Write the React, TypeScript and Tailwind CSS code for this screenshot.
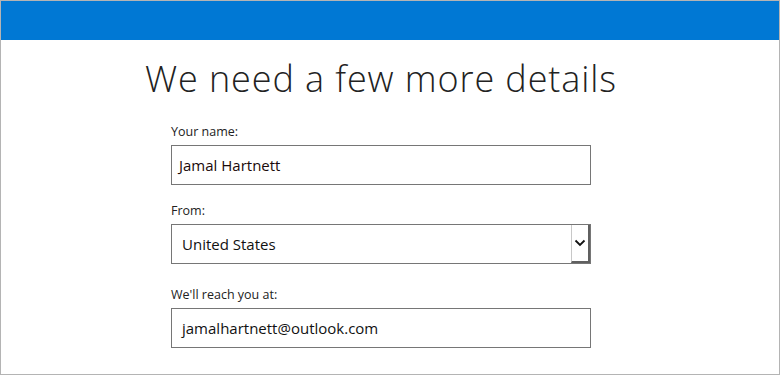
import React from "react";

const font = { fontFamily: '"Open Sans", "Noto Sans", sans-serif' };

function Chevron() {
  return (
    <svg width="12" height="8" viewBox="0 0 12 8" fill="none">
      <path d="M1.5 1.5 L6 6 L10.5 1.5" stroke="#111" strokeWidth="1.8" />
    </svg>
  );
}

export default function App() {
  return (
    <div className="w-[780px] h-[375px] bg-white border border-[#b4b4b4] flex flex-col overflow-hidden" style={font}>
      <div className="h-[39px] bg-[#0078d4] shrink-0" />
      <div className="flex flex-col items-center pr-[18px]">
        <h1 className="mt-[15px] text-[36px] font-light leading-[48px] text-[#222] tracking-[0.9px]">
          We need a few more details
        </h1>
        <div className="w-[420px] mt-[20px] flex flex-col">
          <label className="text-[12.5px] leading-[18px] text-[#222]">Your name:</label>
          <div className="mt-[4px] h-[40px] border border-[#767676] flex items-center pl-[7px] text-[15px] text-[#1a0a0a]">
            Jamal Hartnett
          </div>
          <label className="mt-[17px] text-[12.5px] leading-[18px] text-[#222]">From:</label>
          <div className="mt-[4px] h-[40px] border border-[#767676] flex items-center text-[15px] text-[#111]">
            <span className="flex-1 pl-[10px]">United States</span>
            <div className="w-[19px] h-full border-l border-[#c8c8c8] border-r-2 border-b-2 border-r-[#606060] border-b-[#606060] flex items-center justify-center bg-white">
              <Chevron />
            </div>
          </div>
          <label className="mt-[22px] text-[12.5px] leading-[18px] text-[#222]">We'll reach you at:</label>
          <div className="mt-[4px] h-[40px] border border-[#767676] flex items-center pl-[10px] text-[15px] text-[#111]">
            jamalhartnett@outlook.com
          </div>
        </div>
      </div>
    </div>
  );
}
